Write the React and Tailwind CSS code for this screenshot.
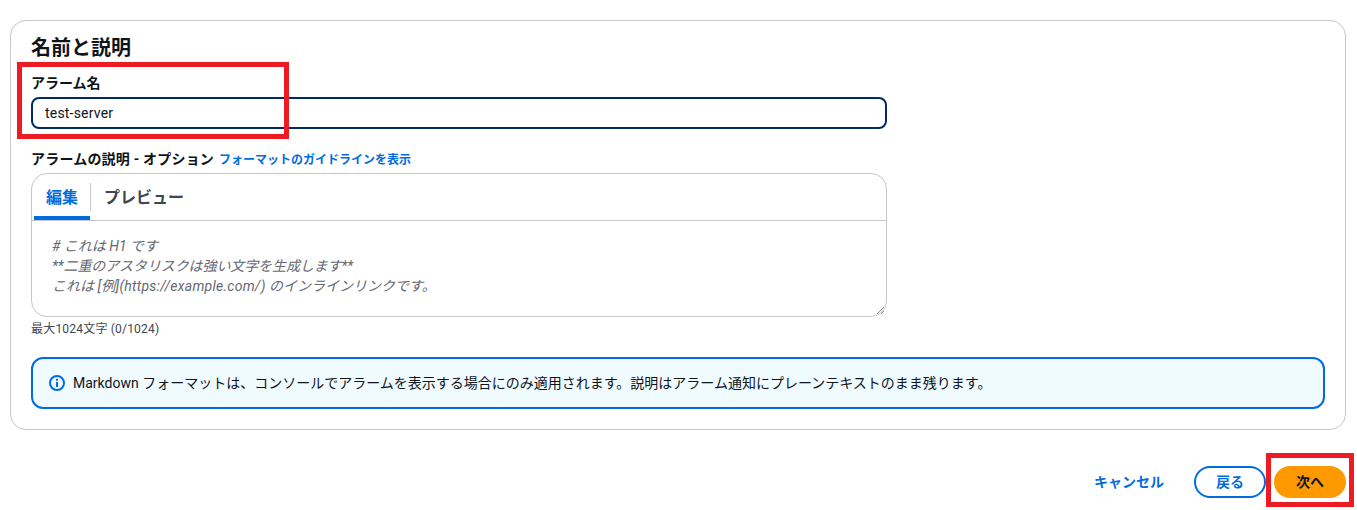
import React from 'react';

const App = () => {
  return (
    <div className="relative h-[510px] w-[1357px] overflow-hidden bg-white pt-5 pl-2.5 text-[#0f141a] font-['Roboto','Noto_Sans_CJK_JP',sans-serif]">
      {/* Name and description card */}
      <div className="flex h-[410px] w-[1336px] flex-col rounded-2xl border border-[#c6c6cd] px-5 pt-[15px]">
        <h2 className="text-xl leading-[24px] font-bold">名前と説明</h2>

        <label className="mt-[13px] text-sm leading-5 font-bold">アラーム名</label>
        <input
          readOnly
          value="test-server"
          className="mt-1 h-8 w-[856px] rounded-lg border-2 border-[#002b66] px-3 text-[14px] tracking-[0.2px] outline-none"
        />

        <div className="mt-5 flex items-baseline gap-[5px]">
          <span className="text-sm leading-5 font-bold tracking-[0.2px]">アラームの説明 - オプション</span>
          <a className="text-xs font-bold text-[#006ce0]">フォーマットのガイドラインを表示</a>
        </div>

        {/* Tabs */}
        <div className="mt-[4px] w-[856px] rounded-2xl border border-[#c6c6cd]">
          <div className="flex h-[47px] border-b border-[#c6c6cd] pl-[2px]">
            <div className="flex h-[46px] w-[56px] items-start justify-center border-b-4 border-[#006ce0] pt-3 text-base leading-6 font-bold text-[#006ce0]">
              編集
            </div>
            <div className="mt-[9px] h-7 w-px bg-[#c6c6cd]" />
            <div className="pt-3 pl-[13px] text-base leading-6 font-bold text-[#424650]">プレビュー</div>
          </div>
          <div className="relative h-[95px] px-5 pt-[15px] text-sm leading-5 text-[#656871] italic">
            <p># これは H1 です</p>
            <p className="tracking-[-0.1px]">**二重のアスタリスクは強い文字を生成します**</p>
            <p>
              これは <span className="tracking-[0.25px]">[例](https://example.com/)</span> のインラインリンクです。
            </p>
            <svg className="absolute right-0 bottom-0" width="12" height="12" viewBox="0 0 12 12">
              <path d="M3 10 L10 3 M7 10 L10 7" stroke="#8c8c94" strokeWidth="1" fill="none" />
            </svg>
          </div>
        </div>

        <p className="mt-[4px] text-xs leading-4 tracking-[0.2px] text-[#424650]">最大1024文字 (0/1024)</p>

        {/* Info alert */}
        <div className="mt-5 flex h-[52px] w-[1294px] items-center gap-2 rounded-xl border-2 border-[#006ce0] bg-[#f0fbff] pl-[16px] text-sm">
          <svg width="16" height="16" viewBox="0 0 16 16" fill="none">
            <circle cx="8" cy="8" r="7" stroke="#006ce0" strokeWidth="2" />
            <path d="M8 7v5" stroke="#006ce0" strokeWidth="2" />
            <path d="M8 3.8v2" stroke="#006ce0" strokeWidth="2" />
          </svg>
          <span>Markdown フォーマットは、コンソールでアラームを表示する場合にのみ適用されます。説明はアラーム通知にプレーンテキストのまま残ります。</span>
        </div>
      </div>

      {/* Footer actions */}
      <div className="mt-[36px] flex w-[1336px] items-center justify-end text-sm font-bold">
        <a className="mr-[30px] text-[#006ce0]">キャンセル</a>
        <button className="mr-2 h-8 w-[72px] rounded-full border-2 border-[#006ce0] text-[#006ce0]">戻る</button>
        <button className="h-8 w-[72px] rounded-full bg-[#ff9900]">次へ</button>
      </div>

      {/* Red annotation boxes */}
      <div className="absolute top-[62px] left-[17px] h-[77px] w-[272px] border-[5px] border-[#ed1c24]" />
      <div className="absolute top-[453px] left-[1266px] h-[54px] w-[88px] border-[5px] border-[#ed1c24]" />
    </div>
  );
};

export default App;
